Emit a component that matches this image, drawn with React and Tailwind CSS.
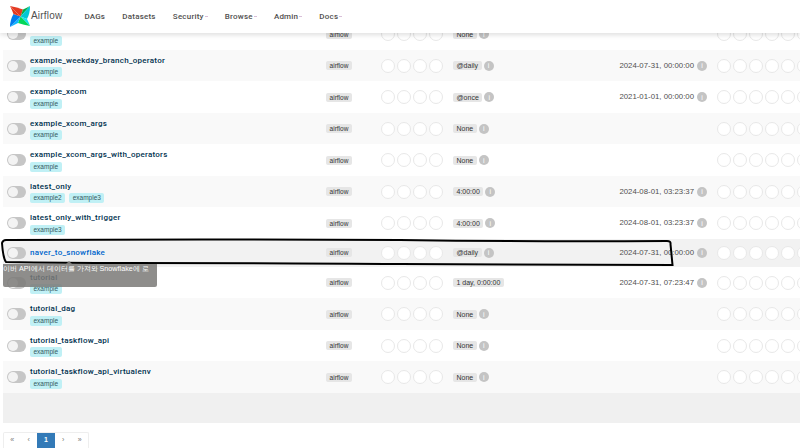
const rows = [
  { name: 'example_trigger_target_dag', tags: ['example'], schedule: 'None' },
  { name: 'example_weekday_branch_operator', tags: ['example'], schedule: '@daily', date: '2024-07-31, 00:00:00', striped: true },
  { name: 'example_xcom', tags: ['example'], schedule: '@once', date: '2021-01-01, 00:00:00' },
  { name: 'example_xcom_args', tags: ['example'], schedule: 'None', striped: true },
  { name: 'example_xcom_args_with_operators', tags: ['example'], schedule: 'None' },
  { name: 'latest_only', tags: ['example2', 'example3'], schedule: '4:00:00', date: '2024-08-01, 03:23:37', striped: true },
  { name: 'latest_only_with_trigger', tags: ['example3'], schedule: '4:00:00', date: '2024-08-01, 03:23:37' },
  { name: 'naver_to_snowflake', tags: [], schedule: '@daily', date: '2024-07-31, 00:00:00', striped: true, active: true },
  { name: 'tutorial', tags: ['example'], schedule: '1 day, 0:00:00', date: '2024-07-31, 07:23:47', noInfo: true },
  { name: 'tutorial_dag', tags: ['example'], schedule: 'None', striped: true },
  { name: 'tutorial_taskflow_api', tags: ['example'], schedule: 'None' },
  { name: 'tutorial_taskflow_api_virtualenv', tags: ['example'], schedule: 'None', striped: true },
]

const nav = ['DAGs', 'Datasets', 'Security', 'Browse', 'Admin', 'Docs']

const Info = () => (
  <span className="flex h-[10px] w-[10px] shrink-0 items-center justify-center rounded-full bg-[#c4c4c4] text-[7px] leading-none text-white">i</span>
)

const Circles = ({ count }) => (
  <div className="flex gap-[2px]">
    {Array.from({ length: count }).map((_, i) => (
      <span key={i} className="h-[14px] w-[14px] shrink-0 rounded-full border border-[#e8e8e8] bg-white" />
    ))}
  </div>
)

const Logo = () => (
  <svg width="21" height="21" viewBox="0 0 21 21" className="shrink-0">
    <path d="M0 0 L10.5 10.5 L13 3.5 Q7 1 0 0 Z" fill="#e43921" />
    <path d="M20 0 L10.5 10.5 L13 3.5 Q16 2 20 0 Z" fill="#00ad46" />
    <path d="M20 0 L10.5 10.5 L17 13 Q20 8 20 0 Z" fill="#00c7d4" />
    <path d="M20 20 L10.5 10.5 L17 13 Q19 17 20 20 Z" fill="#11e1ee" />
    <path d="M20 20 L10.5 10.5 L8 17 Q14 19 20 20 Z" fill="#04d659" />
    <path d="M0 21 L10.5 10.5 L8 17 Q4 19 0 21 Z" fill="#0cb6ff" />
    <path d="M0 21 L10.5 10.5 L3.5 8 Q0 14 0 21 Z" fill="#017cee" />
    <path d="M0 0 L10.5 10.5 L3.5 8 Q2 4 0 0 Z" fill="#e43921" />
  </svg>
)

const Row = ({ row }) => (
  <div className={`flex items-center pt-[0.5px] ${row.active ? 'h-[28px] bg-[#f2f2f2]' : 'h-[31.5px]'} ${row.striped && !row.active ? 'bg-[#f9f9f9]' : ''}`}>
    <span className="ml-[4px] flex h-[12px] w-[19px] shrink-0 items-center rounded-full bg-[#c6c6c6] pl-[1px]">
      <span className="h-[10px] w-[10px] rounded-full bg-[#f3f3f3]" />
    </span>
    <div className="ml-[4px] w-[296px] shrink-0 pt-[1px]">
      <div className={`font-['Roboto',sans-serif] text-[8px] leading-[12px] font-medium tracking-[0.25px] ${row.active ? 'text-[#0066cc]' : 'text-[#00324f]'}`}>{row.name}</div>
      {row.tags.length > 0 && (
        <div className="mt-[0.5px] flex gap-[4px]">
          {row.tags.map((tag) => (
            <span key={tag} className="rounded-[2px] bg-[#c0f0f5] px-[3.5px] text-[6.5px] leading-[10px] text-[#33585f]">{tag}</span>
          ))}
        </div>
      )}
    </div>
    <span className="w-[26px] shrink-0 rounded-[2px] bg-[#e6e6e6] text-center text-[6.5px] leading-[9px] text-[#333]">airflow</span>
    <div className="ml-[29px] w-[74px] shrink-0"><Circles count={4} /></div>
    <div className="-ml-[2px] flex w-[142px] shrink-0 items-center gap-[2px]">
      <span className="rounded-[2px] bg-[#e6e6e6] px-[3.5px] text-[7px] leading-[9px] text-[#333]">{row.schedule}</span>
      {!row.noInfo && <Info />}
    </div>
    <div className="flex w-[112px] shrink-0 items-center justify-end gap-[3px]">
      {row.date && <span className="text-[7.8px] leading-[10px] text-[#51504f]">{row.date}</span>}
      {row.date && <Info />}
    </div>
    <div className="ml-[10px] shrink-0"><Circles count={6} /></div>
  </div>
)

export default function App() {
  return (
    <div className="relative h-[448px] w-[800px] overflow-hidden bg-white font-['Liberation_Sans',sans-serif]">
      <header className="relative z-10 flex h-[33px] items-center bg-white pl-[10px] shadow-[0_2px_5px_rgba(0,0,0,0.13)]">
        <Logo />
        <span className="-mt-[2px] text-[10px] tracking-[0.2px] text-[#51504f]">Airflow</span>
        <nav className="ml-[22px] flex gap-[17.2px]">
          {nav.map((item, i) => (
            <span key={item} className="flex items-center gap-[1px] font-['Roboto',sans-serif] text-[8px] font-medium tracking-[0.2px] text-[#51504f]">
              {item}
              {i > 1 && <span className="h-[1px] w-[3px] bg-[#d9bfd9]" />}
            </span>
          ))}
        </nav>
      </header>

      <main className="-mt-[15px] ml-[3px]">
        {rows.map((row) => <Row key={row.name} row={row} />)}
        <div className="h-[30px] bg-[#f0f0f0]" />
        <div className="mt-[9px] flex h-[17px] w-[86px] rounded-t-[2px] border border-b-0 border-[#eeeeee] text-[7px] text-[#777]">
          {['«', '‹', '1', '›', '»'].map((p) => (
            <span key={p} className={`flex items-center justify-center ${p === '1' ? 'w-[18px] bg-[#337ab7] font-bold text-white' : 'flex-1'}`}>{p}</span>
          ))}
        </div>
      </main>

      {/* hand drawn marker */}
      <svg className="absolute top-0 left-0" width="800" height="448" fill="none">
        <path d="M6 240 Q3 240 2 243 Q3 258 6 262 Q60 263 130 263 Q300 263 400 264 Q540 265 672.5 265 L670.5 244 Q671 241 667 241 Q540 242 400 240 Q200 239 6 240 Z" stroke="#000" strokeWidth="2" />
      </svg>

      {/* tooltip over the tutorial row */}
      <div className="absolute top-[264px] left-[3px] h-[23px] w-[154px] rounded-b-[2px] bg-[#7a7977]/85 text-[7.2px] leading-[9px] whitespace-nowrap text-white">
        <span className="absolute -top-[3px] left-[63px] h-0 w-0 border-x-[3px] border-b-[3px] border-x-transparent border-b-[#7a7977]" />
        이버 API에서 데이터를 가져와 Snowflake에 로
      </div>
    </div>
  )
}
